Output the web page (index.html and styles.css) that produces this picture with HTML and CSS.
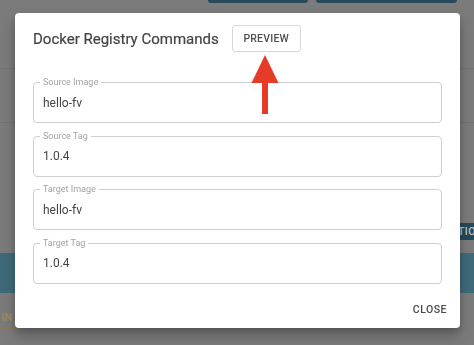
FILE: index.html
```html
<!DOCTYPE html>
<html lang="en">
<head>
  <meta charset="UTF-8">
  <meta name="viewport" content="width=device-width, initial-scale=1.0">
  <title>Docker Registry Commands</title>
  <link rel="stylesheet" href="styles.css">
</head>
<body>
  <!-- page behind the modal -->
  <div class="page">
    <div class="top-actions">
      <span class="top-btn"></span>
      <span class="top-btn wide"></span>
    </div>
    <div class="rule"></div>
    <div class="rule second"></div>
    <div class="row-actions"><span class="ghost-btn">ACTION</span></div>
    <div class="band"></div>
    <div class="chip-row"><span class="chip">SIGN IN</span></div>
  </div>

  <div class="dialog">
    <div class="dialog-title">
      <h2>Docker Registry Commands</h2>
      <button class="preview-btn">Preview</button>
    </div>

    <div class="fields">
      <div class="field">
        <span class="field-label">Source Image</span>
        <span class="field-value">hello-fv</span>
      </div>
      <div class="field">
        <span class="field-label">Source Tag</span>
        <span class="field-value">1.0.4</span>
      </div>
      <div class="field">
        <span class="field-label">Target Image</span>
        <span class="field-value">hello-fv</span>
      </div>
      <div class="field">
        <span class="field-label">Target Tag</span>
        <span class="field-value">1.0.4</span>
      </div>
    </div>

    <div class="dialog-actions">
      <button class="text-btn">Close</button>
    </div>

    <svg class="arrow" width="28" height="60" viewBox="0 0 28 60">
      <polygon points="14,0 27.5,28 0.5,28" fill="#e63b27"/>
      <rect x="11" y="27" width="6" height="32" fill="#e63b27"/>
    </svg>
  </div>
</body>
</html>
```

FILE: styles.css
```css
* {
  margin: 0; padding: 0;
  box-sizing: border-box;
  font-family: Roboto, 'Liberation Sans', Arial, sans-serif;
}
body { background: #7b7b7b; width: 474px; height: 345px; overflow: hidden; }

.page { height: 345px; display: flex; flex-direction: column; overflow: hidden; }
.top-actions { display: flex; gap: 8px; padding-left: 208px; }
.top-btn { width: 100px; height: 3px; background: #294a5b; border-radius: 0 0 4px 4px; }
.top-btn.wide { width: 141px; }
.rule { height: 1px; background: #727272; margin-top: 65px; }
.rule.second { margin-top: 53px; }
.row-actions { display: flex; justify-content: flex-end; margin-top: 100px; }
.ghost-btn {
  height: 17px; padding: 0 6px; margin-right: -16px;
  background: #264858; color: #b9c6cc; border-radius: 3px;
  font-size: 10.5px; font-weight: 500; letter-spacing: 0.5px; line-height: 17px;
}
.band { height: 40px; background: #3f6a79; margin-top: 13px; }
.chip-row { margin-top: 14px; display: flex; }
.chip {
  margin-left: -34px; height: 22px; padding: 0 8px;
  border: 1px solid #8a7b5e; border-radius: 3px; color: #a48c5a;
  font-size: 10.5px; font-weight: 500; line-height: 20px;
}

.dialog {
  position: fixed; left: 15px; top: 13px; width: 445px; height: 315px;
  background: #fff; border-radius: 4px;
  box-shadow: 0 8px 14px rgba(0,0,0,0.22), 0 3px 6px rgba(0,0,0,0.16);
  padding: 12px 18px 0 18px;
  display: flex; flex-direction: column;
}
.dialog-title { display: flex; align-items: center; gap: 13px; height: 27px; }
.dialog-title h2 { font-size: 15px; font-weight: 400; color: #444; -webkit-text-stroke: 0.2px #444; }
.preview-btn {
  width: 69px; height: 27px; background: #fff;
  border: 1px solid #d8d8d8; border-radius: 3px;
  color: #4f4f4f; font-size: 10.5px; font-weight: 500;
  letter-spacing: 0.2px; text-transform: uppercase;
}

.fields { display: flex; flex-direction: column; gap: 12.5px; margin-top: 30px; }
.field {
  position: relative; height: 41px;
  border: 1px solid #cfcfcf; border-radius: 4px;
  display: flex; align-items: center; padding-left: 9px;
}
.field-label {
  position: absolute; left: 6px; top: -6px;
  padding: 0 3px; background: #fff;
  font-size: 9px; line-height: 11px; color: #a3a3a3;
}
.field-value { font-size: 12px; color: #444; }

.dialog-actions { display: flex; justify-content: flex-end; margin-top: 15px; margin-right: -5px; }
.text-btn {
  background: none; border: none; padding: 4px 0;
  color: #4a4a4a; font-size: 10.5px; font-weight: 500;
  letter-spacing: 0.5px; text-transform: uppercase;
}

.arrow { position: absolute; left: 236px; top: 42px; }
```
